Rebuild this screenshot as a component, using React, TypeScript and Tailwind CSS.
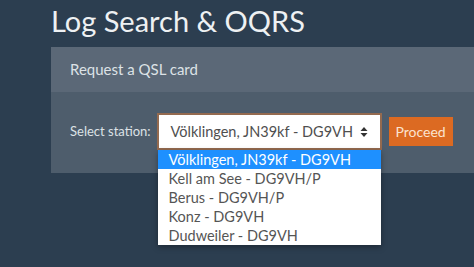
import React from "react";

const stations = [
	"Völklingen, JN39kf - DG9VH",
	"Kell am See - DG9VH/P",
	"Berus - DG9VH/P",
	"Konz - DG9VH",
	"Dudweiler - DG9VH",
];

function SortArrows() {
	return (
		<svg width="8" height="12" viewBox="0 0 8 12" className="shrink-0">
			<path d="M4 1 L7.5 5 H0.5 Z" fill="#333" />
			<path d="M4 11 L7.5 7 H0.5 Z" fill="#333" />
		</svg>
	);
}

export default function App() {
	return (
		<div className="h-[267px] w-full overflow-hidden bg-[#2c3e50] font-['Lato','Open_Sans',sans-serif]">
			<div className="pl-[51px] pt-[3px]">
				<h1 className="text-[29px] leading-[36px] text-[#eef1f3] whitespace-nowrap">Log Search &amp; OQRS</h1>

				{/* Card */}
				<div className="mt-[8px]">
					<div className="flex h-[45px] items-center bg-[#5b6877] px-[19px] text-[15px] text-[#dde2e6]">
						Request a QSL card
					</div>
					<div className="flex h-[81px] items-center bg-[#4e5d6c] px-[19px] pb-[2px]">
						<span className="mr-[6px] text-[13px] text-[#dde2e6] whitespace-nowrap">Select station:</span>

						<div className="relative">
							<div className="flex h-[37px] w-[225px] items-center justify-between border-2 border-[#946a4f] bg-white pl-[12px] pr-[12px] text-[14.5px] text-[#4f4f4f]">
								<span className="whitespace-nowrap">{stations[0]}</span>
								<SortArrows />
							</div>

							{/* Open option list */}
							<ul className="absolute left-[1px] top-[37px] z-10 w-[223px] bg-white shadow-[0_2px_6px_rgba(0,0,0,0.35)]">
								{stations.map((s, i) => (
									<li
										key={s}
										className={
											i === 0
												? "h-[19px] bg-[#1e90ff] pl-[11px] text-[14.5px] leading-[19px] text-white whitespace-nowrap"
												: "h-[19px] pl-[11px] text-[14.5px] leading-[19px] text-[#555555] whitespace-nowrap"
										}
									>
										{s}
									</li>
								))}
							</ul>
						</div>

						<button className="ml-[7px] h-[29px] w-[64px] bg-[#dc6a22] text-[14px] text-[#fbe3cf]">
							Proceed
						</button>
					</div>
				</div>
			</div>
		</div>
	);
}
